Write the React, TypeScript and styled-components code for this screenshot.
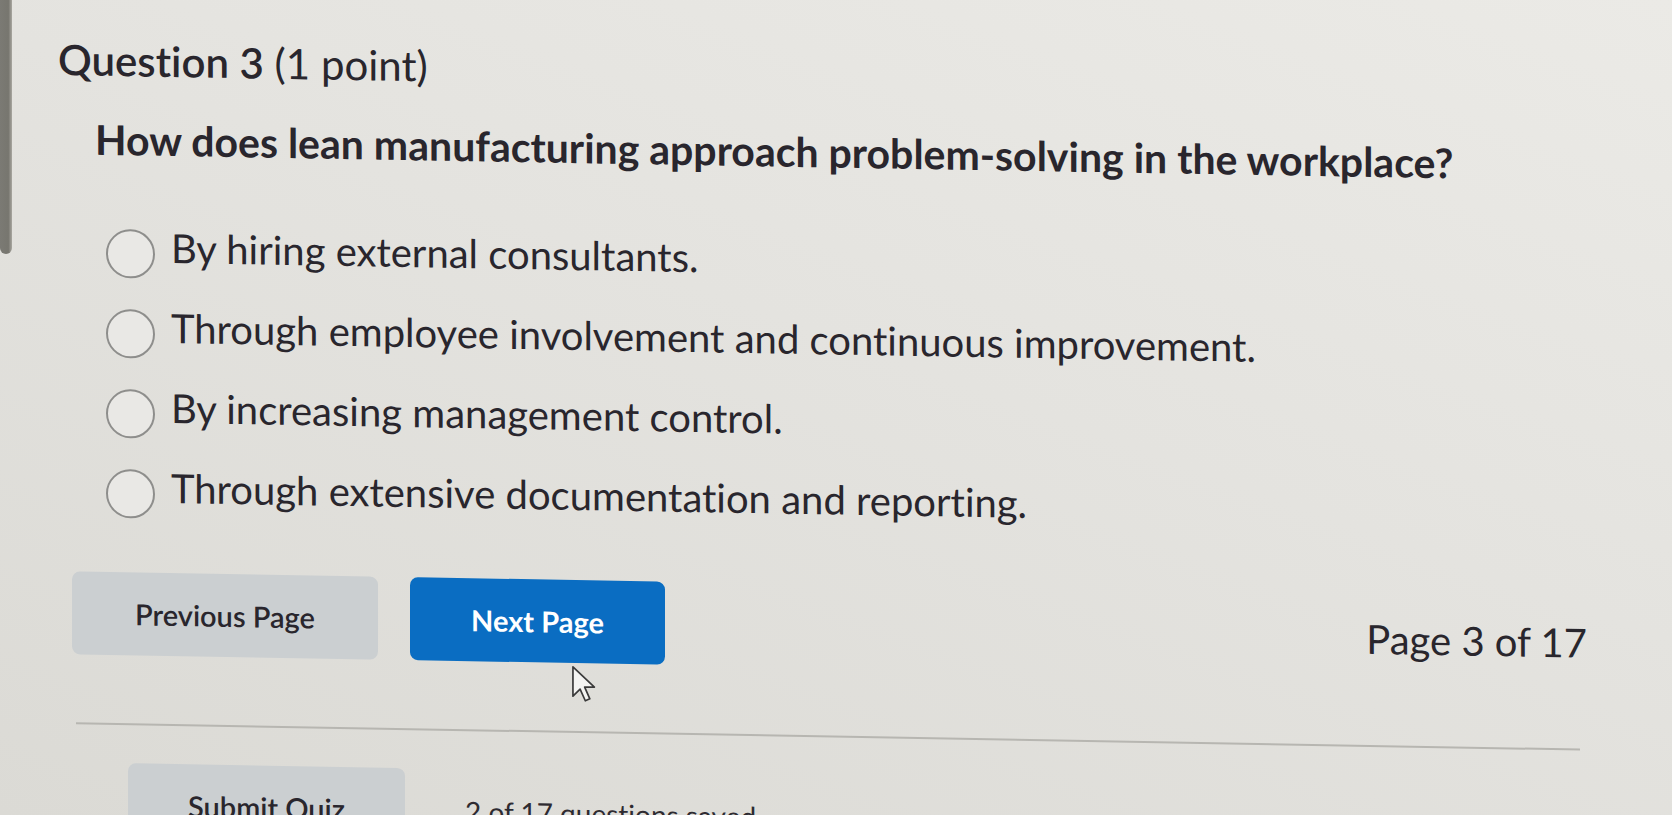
import React from "react";
import styled, { createGlobalStyle } from "styled-components";

const GlobalStyle = createGlobalStyle`
  html, body {
    margin: 0;
    padding: 0;
    width: 100%;
    height: 100%;
    overflow: hidden;
  }
  body {
    font-family: Lato, "Open Sans", "Liberation Sans", sans-serif;
    font-variant-ligatures: none;
    color: #29262d;
    background: linear-gradient(200deg, #ebeae6 0%, #e4e3df 45%, #dbdad5 100%);
  }
`;

const Screen = styled.div`
  position: relative;
  width: 1672px;
  height: 815px;
  overflow: hidden;
`;

const Page = styled.main`
  display: flex;
  flex-direction: column;
  padding: 33px 85px 0 58px;
  transform: skewY(1deg);
  transform-origin: 0 0;
`;

const Heading = styled.h2`
  margin: 0;
  font-size: 42px;
  line-height: 50px;
  font-weight: 400;
`;

const HeadingStrong = styled.span`
  font-weight: 600;
`;

const QuestionText = styled.p`
  margin: 30px 0 0 37px;
  font-size: 41px;
  line-height: 50px;
  font-weight: 700;
`;

const Options = styled.div`
  display: flex;
  flex-direction: column;
  gap: 30px;
  margin: 57px 0 0 48px;
`;

const Option = styled.label`
  display: flex;
  align-items: flex-start;
  gap: 16px;
  height: 50px;
  font-size: 40px;
  line-height: 50px;
  cursor: pointer;
`;

const Radio = styled.span`
  flex: none;
  width: 49px;
  height: 49px;
  margin-top: 7px;
  box-sizing: border-box;
  border-radius: 50%;
  border: 2px solid #8e8e8c;
  background: #e9e8e5;
`;

const ButtonRow = styled.div`
  display: flex;
  align-items: flex-start;
  gap: 32px;
  margin: 60px 0 0 14px;
`;

const Button = styled.button<{ $primary?: boolean; $width: number }>`
  width: ${(p) => p.$width}px;
  height: 83px;
  border: none;
  border-radius: 8px;
  font-family: Lato, "Open Sans", "Liberation Sans", sans-serif;
  font-variant-ligatures: none;
  font-size: 29px;
  font-weight: ${(p) => (p.$primary ? 700 : 600)};
  color: ${(p) => (p.$primary ? "#ffffff" : "#29262d")};
  background: ${(p) => (p.$primary ? "#0a6dc2" : "#cbcfd1")};
  padding: 0;
`;

const PageLabel = styled.span`
  margin-left: auto;
  margin-top: 21px;
  font-size: 40px;
  line-height: 48px;
`;

const Divider = styled.hr`
  margin: 68px 7px 0 18px;
  border: none;
  height: 2px;
  background: #b7b6b1;
`;

const SubmitRow = styled.div`
  display: flex;
  align-items: center;
  gap: 60px;
  margin: 38px 0 0 70px;
`;

const SavedText = styled.span`
  font-size: 28px;
  line-height: 32px;
  color: #2e2b31;
`;

const ScrollThumb = styled.div`
  position: absolute;
  left: 0;
  top: 0;
  width: 12px;
  height: 254px;
  border-radius: 0 0 6px 6px;
  background: linear-gradient(90deg, #7b7a74 0%, #77766f 70%, #a9a7a0 100%);
`;

const Cursor = styled.svg`
  position: absolute;
  left: 571px;
  top: 665px;
  width: 26px;
  height: 39px;
`;

const options = [
  "By hiring external consultants.",
  "Through employee involvement and continuous improvement.",
  "By increasing management control.",
  "Through extensive documentation and reporting.",
];

export default function App() {
  return (
    <>
      <GlobalStyle />
      <Screen>
        <Page>
          <Heading>
            <HeadingStrong>Question 3</HeadingStrong> (1 point)
          </Heading>
          <QuestionText>
            How does lean manufacturing approach problem-solving in the workplace?
          </QuestionText>
          <Options>
            {options.map((o) => (
              <Option key={o}>
                <Radio />
                <span>{o}</span>
              </Option>
            ))}
          </Options>
          <ButtonRow>
            <Button $width={306}>Previous Page</Button>
            <Button $width={255} $primary>
              Next Page
            </Button>
            <PageLabel>Page 3 of 17</PageLabel>
          </ButtonRow>
          <Divider />
          <SubmitRow>
            <Button $width={277}>Submit Quiz</Button>
            <SavedText>2 of 17 questions saved</SavedText>
          </SubmitRow>
        </Page>
        <ScrollThumb />
        <Cursor viewBox="0 0 20 30">
          <path
            d="M1.5 1.5 L1.5 24 L7 18.5 L11 27.5 L14.5 26 L10.5 17 L18 17 Z"
            fill="#f4f4f2"
            stroke="#3a3a3a"
            strokeWidth="1.3"
            strokeLinejoin="round"
          />
        </Cursor>
      </Screen>
    </>
  );
}
